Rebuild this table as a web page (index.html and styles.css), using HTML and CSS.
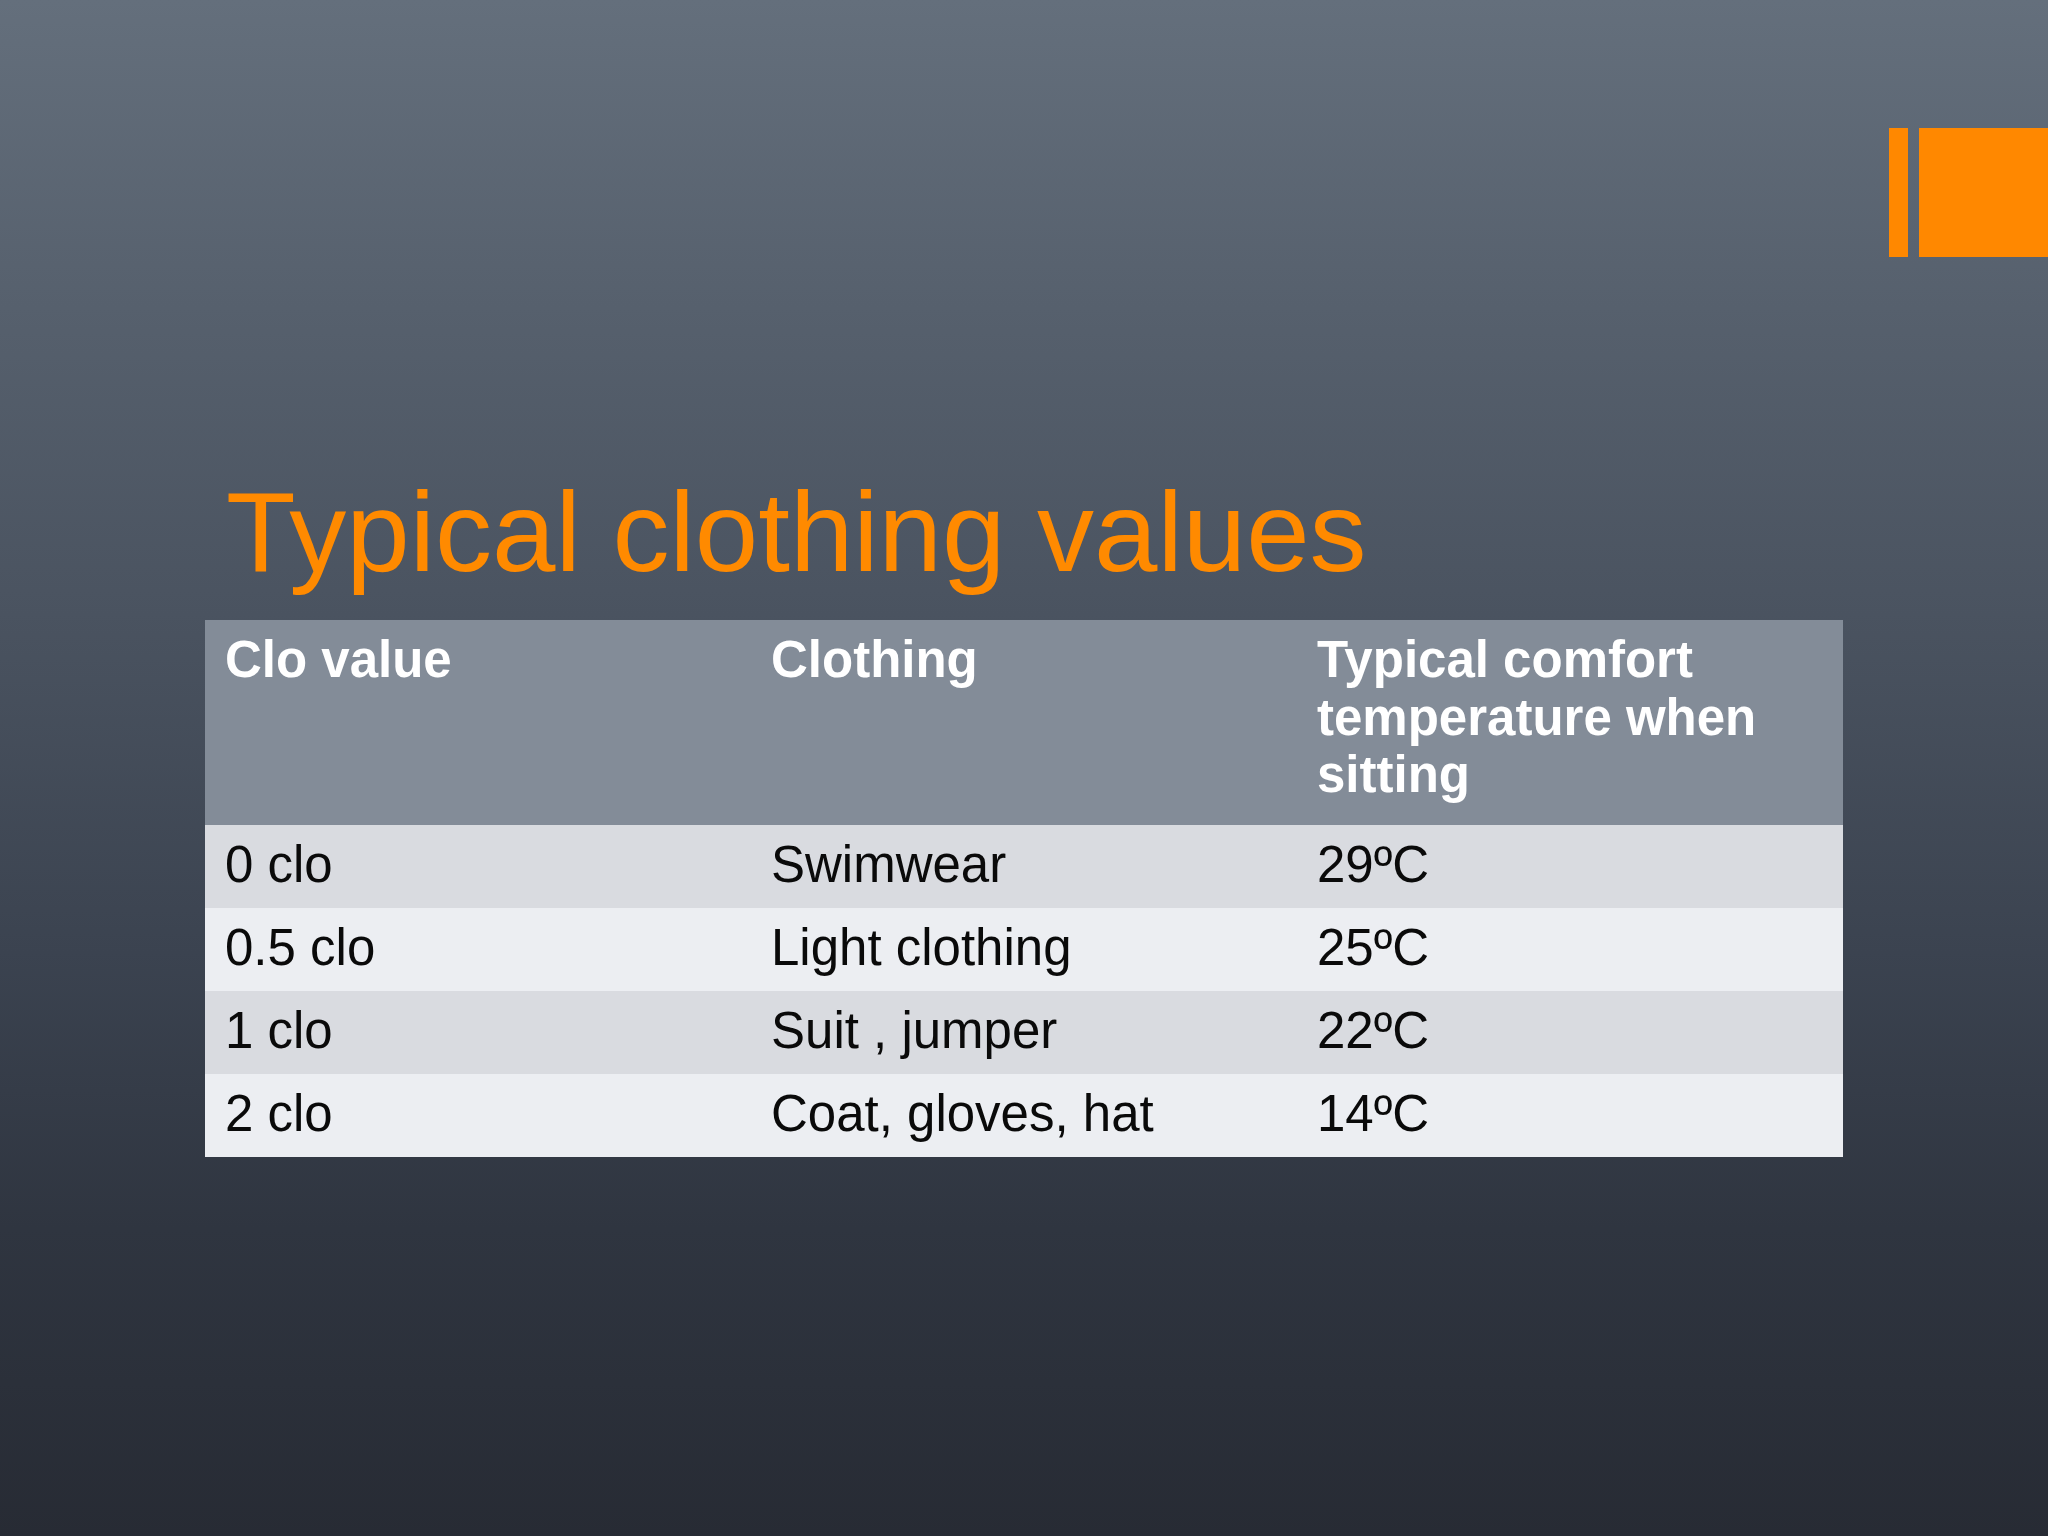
FILE: index.html
```html
<!DOCTYPE html>
<html lang="en">
<head>
<meta charset="utf-8">
<title>Typical clothing values</title>
<link rel="stylesheet" href="styles.css">
</head>
<body>
<div class="slide">
  <div class="accent">
    <div class="accent-thin"></div>
    <div class="accent-block"></div>
  </div>
  <h1 class="title">Typical clothing values</h1>
  <table class="clo-table">
    <colgroup><col class="col"><col class="col"><col class="col"></colgroup>
    <thead>
      <tr class="head-row">
        <th>Clo value</th>
        <th>Clothing</th>
        <th>Typical comfort temperature when sitting</th>
      </tr>
    </thead>
    <tbody>
      <tr class="row odd"><td>0 clo</td><td>Swimwear</td><td>29ºC</td></tr>
      <tr class="row even"><td>0.5 clo</td><td>Light clothing</td><td>25ºC</td></tr>
      <tr class="row odd"><td>1 clo</td><td>Suit , jumper</td><td>22ºC</td></tr>
      <tr class="row even"><td>2 clo</td><td>Coat, gloves, hat</td><td>14ºC</td></tr>
    </tbody>
  </table>
</div>
</body>
</html>
```
FILE: styles.css
```css
html, body {
  margin: 0;
  padding: 0;
}
body {
  width: 2048px;
  height: 1536px;
  overflow: hidden;
  font-family: "Liberation Sans", Arial, sans-serif;
}
.slide {
  width: 2048px;
  height: 1536px;
  display: flex;
  flex-direction: column;
  background: linear-gradient(180deg, #646f7c 0%, #56606d 20%, #4a5360 40%, #3b4350 62%, #2f3540 80%, #272b34 100%);
}
.accent {
  margin-top: 128px;
  height: 129px;
  display: flex;
  justify-content: flex-end;
  gap: 11px;
}
.accent-thin {
  width: 19px;
  background: #ff8800;
}
.accent-block {
  width: 129px;
  background: #ff8800;
}
.title {
  margin: 218px 0 0 0;
  padding-left: 226px;
  font-size: 114px;
  line-height: 114px;
  font-weight: normal;
  color: #ff8a00;
  white-space: nowrap;
}
.clo-table {
  margin: 31px 0 0 205px;
  width: 1638px;
  border-collapse: collapse;
  table-layout: fixed;
  font-size: 51px;
  line-height: 57.5px;
}
.col {
  width: 546px;
}
.clo-table th,
.clo-table td {
  padding: 11px 20px 0 20px;
  vertical-align: top;
  text-align: left;
}
.head-row {
  height: 205px;
  background: #838c98;
}
.head-row th {
  color: #ffffff;
  font-weight: bold;
}
.row {
  height: 83px;
}
.row td {
  color: #0a0a0a;
}
.odd {
  background: #d9dbe0;
}
.even {
  background: #eceef2;
}
```
